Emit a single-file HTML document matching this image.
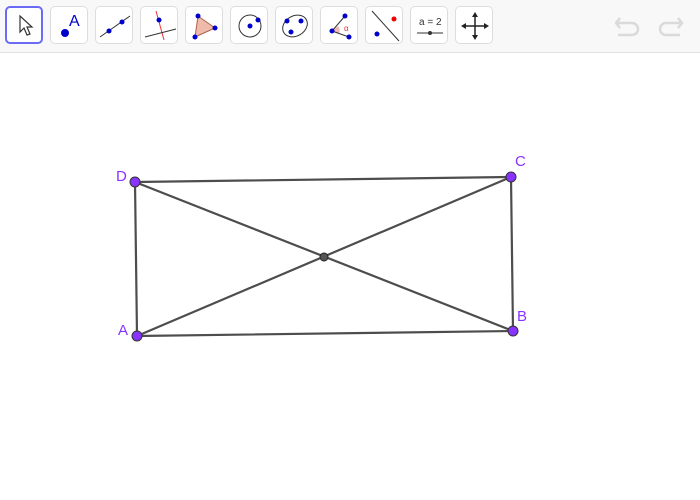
<!DOCTYPE html>
<html><head><meta charset="utf-8"><style>
body{margin:0;width:700px;height:500px;background:#fff;overflow:hidden;font-family:"Liberation Sans",sans-serif}
.tb{position:absolute;left:0;top:0;width:700px;height:52px;background:#f8f8f8;border-bottom:1px solid #e0e0e0}
.b{position:absolute;top:6px;width:38px;height:38px;background:#fff;border:1px solid #ddd;border-radius:5px;box-sizing:border-box}
.b svg{position:absolute;left:0;top:0}
.sel{border:2px solid #6b6bf5}
</style></head><body>
<div class="tb">
<div class="b sel" style="left:5px"><svg width="34" height="34" viewBox="0 0 34 34"><path d="M13 8 L13 24 L17 20 L20 27 L23 26 L20 19 L25 19 Z" fill="#fff" stroke="#333" stroke-width="1.2"/></svg></div>
<div class="b" style="left:50px"><svg width="38" height="38"><circle cx="14" cy="26" r="4" fill="#00c"/><text x="18" y="19" font-size="16" fill="#00c" font-family="Liberation Sans">A</text></svg></div>
<div class="b" style="left:95px"><svg width="38" height="38"><line x1="4" y1="30" x2="34" y2="9" stroke="#333"/><circle cx="13" cy="24" r="2.5" fill="#00c"/><circle cx="26" cy="15" r="2.5" fill="#00c"/></svg></div>
<div class="b" style="left:140px"><svg width="38" height="38"><line x1="15" y1="4" x2="23" y2="33" stroke="#e33"/><line x1="4" y1="30" x2="35" y2="22" stroke="#333"/><circle cx="18" cy="13" r="2.5" fill="#00c"/></svg></div>
<div class="b" style="left:185px"><svg width="38" height="38"><polygon points="12,9 29,21 9,30" fill="#eebbaa" stroke="#b06050"/><circle cx="12" cy="9" r="2.5" fill="#00c"/><circle cx="29" cy="21" r="2.5" fill="#00c"/><circle cx="9" cy="30" r="2.5" fill="#00c"/></svg></div>
<div class="b" style="left:230px"><svg width="38" height="38"><circle cx="19" cy="19" r="11" fill="none" stroke="#333"/><circle cx="19" cy="19" r="2.5" fill="#00c"/><circle cx="27" cy="13" r="2.5" fill="#00c"/></svg></div>
<div class="b" style="left:275px"><svg width="38" height="38"><ellipse cx="19" cy="19" rx="13" ry="10" transform="rotate(-30 19 19)" fill="none" stroke="#333"/><circle cx="11" cy="14" r="2.5" fill="#00c"/><circle cx="25" cy="14" r="2.5" fill="#00c"/><circle cx="15" cy="25" r="2.5" fill="#00c"/></svg></div>
<div class="b" style="left:320px"><svg width="38" height="38"><path d="M11 24 L17 19 A8 8 0 0 1 18 27 Z" fill="#f0b8b0"/><line x1="11" y1="24" x2="24" y2="9" stroke="#333"/><line x1="11" y1="24" x2="28" y2="30" stroke="#333"/><circle cx="24" cy="9" r="2.5" fill="#00c"/><circle cx="11" cy="24" r="2.5" fill="#00c"/><circle cx="28" cy="30" r="2.5" fill="#00c"/><text x="23" y="24" font-size="8" fill="#e33">α</text></svg></div>
<div class="b" style="left:365px"><svg width="38" height="38"><line x1="6" y1="4" x2="33" y2="34" stroke="#333"/><circle cx="28" cy="12" r="2.5" fill="#e00"/><circle cx="11" cy="27" r="2.5" fill="#00c"/></svg></div>
<div class="b" style="left:410px"><svg width="38" height="38"><text x="8" y="18" font-size="10" fill="#333" font-family="Liberation Sans">a = 2</text><line x1="6" y1="26" x2="32" y2="26" stroke="#333"/><circle cx="19" cy="26" r="2" fill="#333"/></svg></div>
<div class="b" style="left:455px"><svg width="38" height="38"><path d="M19 8 V30 M8 19 H30" stroke="#222" stroke-width="1.5"/><path d="M19 5 L16 10 H22Z M19 33 L16 28 H22Z M5 19 L10 16 V22Z M33 19 L28 16 V22Z" fill="#222"/></svg></div>
<svg style="position:absolute;left:612px;top:12px" width="80" height="30"><path d="M8 6 L4 11 L8 16 M4 11 H20 A6 6 0 0 1 20 23 H6" fill="none" stroke="#dadada" stroke-width="2.5"/><path d="M66 6 L70 11 L66 16 M70 11 H54 A6 6 0 0 0 54 23 H68" fill="none" stroke="#dadada" stroke-width="2.5"/></svg>
</div>
<svg style="position:absolute;left:0;top:0" width="700" height="500">
<g stroke="#4d4d4d" stroke-width="2.2" fill="none">
<polygon points="135,182 511,177 513,331 137,336"/>
<line x1="135" y1="182" x2="513" y2="331"/>
<line x1="137" y1="336" x2="511" y2="177"/>
</g>
<circle cx="324" cy="257" r="4" fill="#555" stroke="#222" stroke-width="1"/>
<g fill="#8833ff" stroke="#333" stroke-width="1">
<circle cx="135" cy="182" r="5"/><circle cx="511" cy="177" r="5"/><circle cx="513" cy="331" r="5"/><circle cx="137" cy="336" r="5"/>
</g>
<g fill="#8833ff" font-size="15" font-family="Liberation Sans">
<text x="116" y="181">D</text><text x="515" y="166">C</text><text x="517" y="321">B</text><text x="118" y="335">A</text>
</g>
</svg>
</body></html>
